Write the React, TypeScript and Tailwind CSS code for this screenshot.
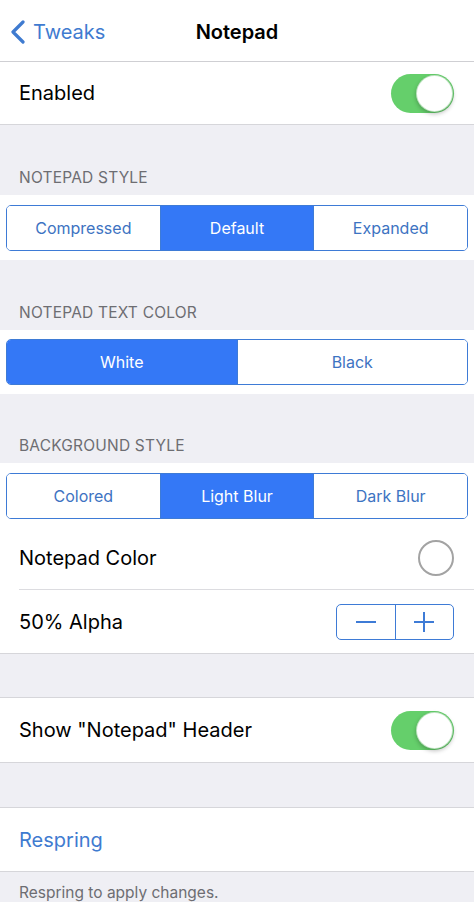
import React from "react";

function Toggle() {
  return (
    <div className="relative w-[63px] h-[39px] rounded-full bg-[#65cf6b] mr-[20px]">
      <div className="absolute right-[1px] top-[1px] w-[37px] h-[37px] rounded-full bg-white shadow-[0_2px_4px_rgba(0,0,0,0.25)] border border-[#5fb863]/40" />
    </div>
  );
}

function Segmented({ items, selected }: { items: string[]; selected: number }) {
  return (
    <div className="flex h-[46px] rounded-[5px] border border-[#3e7bd6] overflow-hidden">
      {items.map((it, i) => (
        <div
          key={it}
          className={
            "flex-1 flex items-center justify-center text-[16px] " +
            (i === selected ? "bg-[#3478f6] text-white" : "bg-white text-[#3d73c2]") +
            (i > 0 ? " border-l border-[#3e7bd6]" : "")
          }
        >
          {it}
        </div>
      ))}
    </div>
  );
}

function Header({ text, h }: { text: string; h: string }) {
  return (
    <div className={"bg-[#efeff4] flex items-end px-[19px] pb-[6px] text-[15.5px] text-[#6d6d72] tracking-[0.2px] " + h}>
      {text}
    </div>
  );
}

export default function App() {
  return (
    <div
      className="w-[474px] h-[902px] overflow-hidden bg-[#efeff4] text-black"
      style={{ fontFamily: "Inter, 'Liberation Sans', sans-serif" }}
    >
      {/* Nav */}
      <div className="relative h-[62px] bg-white border-b border-[#cfcfd3] flex items-center pt-[3px]">
        <div className="flex items-center pl-[10px] text-[#3f7bd0] text-[20px]">
          <svg width="16" height="24" viewBox="0 0 16 24" className="mr-[7px]">
            <path d="M13 2 L3 12 L13 22" fill="none" stroke="#3f7bd0" strokeWidth="3.2" strokeLinecap="round" strokeLinejoin="round" />
          </svg>
          <span>Tweaks</span>
        </div>
        <div className="absolute left-0 right-0 text-center text-[20px] font-semibold pointer-events-none">Notepad</div>
      </div>

      {/* Enabled */}
      <div className="h-[63px] bg-white border-b border-[#d6d6da] flex items-center justify-between pl-[19px]">
        <span className="text-[20px]">Enabled</span>
        <Toggle />
      </div>

      <Header text="NOTEPAD STYLE" h="h-[70px]" />
      <div className="bg-white h-[65px] px-[6px] pt-[10px]">
        <Segmented items={["Compressed", "Default", "Expanded"]} selected={1} />
      </div>

      <Header text="NOTEPAD TEXT COLOR" h="h-[70px]" />
      <div className="bg-white h-[64px] px-[6px] pt-[9px]">
        <Segmented items={["White", "Black"]} selected={0} />
      </div>

      <Header text="BACKGROUND STYLE" h="h-[69px]" />
      <div className="bg-white h-[64px] px-[6px] pt-[10px]">
        <Segmented items={["Colored", "Light Blur", "Dark Blur"]} selected={1} />
      </div>
      <div className="bg-white">
        <div className="h-[62px] flex items-center justify-between pl-[19px] pr-[20px]">
          <span className="text-[20px]">Notepad Color</span>
          <div className="w-[36px] h-[36px] rounded-full border-2 border-[#a3a3a3]" />
        </div>
        <div className="ml-[19px] h-px bg-[#dcdce0]" />
        <div className="h-[64px] flex items-center justify-between pl-[19px] pr-[20px] border-b border-[#d6d6da]">
          <span className="text-[20px]">50% Alpha</span>
          <div className="flex w-[118px] h-[36px] rounded-[5px] border border-[#3e7bd6]">
            <div className="flex-1 flex items-center justify-center">
              <svg width="22" height="22" viewBox="0 0 22 22">
                <path d="M1 11 H21" stroke="#3e7bd6" strokeWidth="2" />
              </svg>
            </div>
            <div className="w-px bg-[#3e7bd6]" />
            <div className="flex-1 flex items-center justify-center">
              <svg width="22" height="22" viewBox="0 0 22 22">
                <path d="M1 11 H21 M11 1 V21" stroke="#3e7bd6" strokeWidth="2" />
              </svg>
            </div>
          </div>
        </div>
      </div>

      <div className="h-[44px] border-b border-[#d6d6da]" />
      <div className="h-[65px] bg-white border-b border-[#d6d6da] flex items-center justify-between pl-[19px]">
        <span className="text-[20px]">Show "Notepad" Header</span>
        <Toggle />
      </div>

      <div className="h-[45px] border-b border-[#d6d6da]" />
      <div className="h-[64px] bg-white border-b border-[#d6d6da] flex items-center pl-[19px]">
        <span className="text-[20px] text-[#3f7bd0]">Respring</span>
      </div>
      <div className="pl-[19px] pt-[9px] text-[15.5px] text-[#6d6d72]">Respring to apply changes.</div>
    </div>
  );
}
